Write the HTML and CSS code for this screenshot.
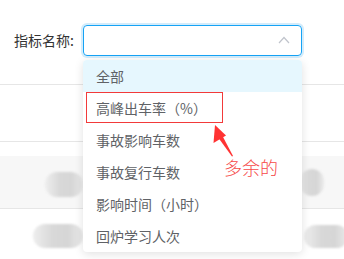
FILE: index.html
```html
<!DOCTYPE html>
<html lang="zh">
<head>
<meta charset="utf-8">
<link rel="stylesheet" href="styles.css">
</head>
<body>
<div class="page">
  <div class="form-row">
    <label class="label">指标名称:</label>
    <div class="select">
      <svg class="chev" width="12" height="8" viewBox="0 0 12 8"><polyline points="1,7 6,1.5 11,7" fill="none" stroke="#c0c4cc" stroke-width="1.2"/></svg>
    </div>
  </div>
  <div class="rule r1"></div>
  <div class="rule r2"></div>
  <div class="band"></div>
  <div class="row-last"></div>

  <div class="blob b1"></div>
  <div class="blob b2"></div>
  <div class="blob b3"></div>
  <div class="blob b4"></div>

  <ul class="dropdown">
    <li class="item active">全部</li>
    <li class="item">高峰出车率（%）</li>
    <li class="item">事故影响车数</li>
    <li class="item">事故复行车数</li>
    <li class="item">影响时间（小时）</li>
    <li class="item">回炉学习人次</li>
  </ul>

  <div class="mark-box"></div>
  <svg class="mark-arrow" width="30" height="40" viewBox="210 122 30 40">
    <polygon points="215,125 213.5,143 226,135.5" fill="#f33"/>
    <polygon points="218.5,138 222.5,136 233,156 232,156.5" fill="#f33"/>
  </svg>
  <div class="mark-text">多余的</div>
</div>
</body>
</html>
```
FILE: styles.css
```css
* { box-sizing: border-box; }
html, body { margin: 0; padding: 0; background: #fff; }
body { font-family: "Noto Sans CJK SC", "Noto Sans", sans-serif; }
.page { position: relative; width: 344px; height: 259px; overflow: hidden; }
.form-row { display: flex; align-items: center; padding: 25px 0 0 14px; height: 56px; }
.label { font-size: 14px; color: #333; width: 69px; line-height: 31px; }
.select {
  position: relative;
  width: 219px; height: 31px;
  border: 1px solid #16a3f5;
  border-radius: 4px;
  box-shadow: 0 0 0 2px #d3ecfb;
  display: flex; align-items: center; justify-content: flex-end;
  padding-right: 11px;
}
.chev { display: block; margin-top: -2px; }
.rule { border-top: 1px solid #e6e6e6; }
.r1 { margin-top: 28px; }
.r2 { margin-top: 56px; }
.band { margin-top: 14px; height: 53px; background: #f7f7f7; border-bottom: 1px solid #e6e6e6; }
.row-last { height: 49px; }
.blob { position: absolute; background: linear-gradient(90deg, #eeeeee, #d8d8d8 40%, #d6d6d6 70%, #ebebeb); border-radius: 12px; filter: blur(1px); }
.b1 { left: 45px; top: 172px; width: 38px; height: 25px; }
.b2 { left: 33px; top: 224px; width: 50px; height: 24px; }
.b3 { left: 300px; top: 169px; width: 24px; height: 27px; }
.b4 { left: 304px; top: 225px; width: 44px; height: 23px; }
.dropdown {
  position: absolute; left: 83px; top: 60px; width: 219px;
  margin: 0; padding: 0; list-style: none;
  background: #fff; border-radius: 4px;
  box-shadow: 0 2px 10px rgba(0,0,0,0.12);
}
.item { height: 32px; line-height: 32px; padding-left: 13px; font-size: 14px; color: #606266; }
.item.active { background: #e6f7fe; border-radius: 4px 4px 0 0; }
.mark-box { position: absolute; left: 86px; top: 92px; width: 137px; height: 31px; border: 1px solid #f23a3a; }
.mark-arrow { position: absolute; left: 210px; top: 122px; }
.mark-text { position: absolute; left: 224px; top: 155px; font-size: 18px; line-height: 24px; color: #f64a4a; font-weight: 300; }
```
